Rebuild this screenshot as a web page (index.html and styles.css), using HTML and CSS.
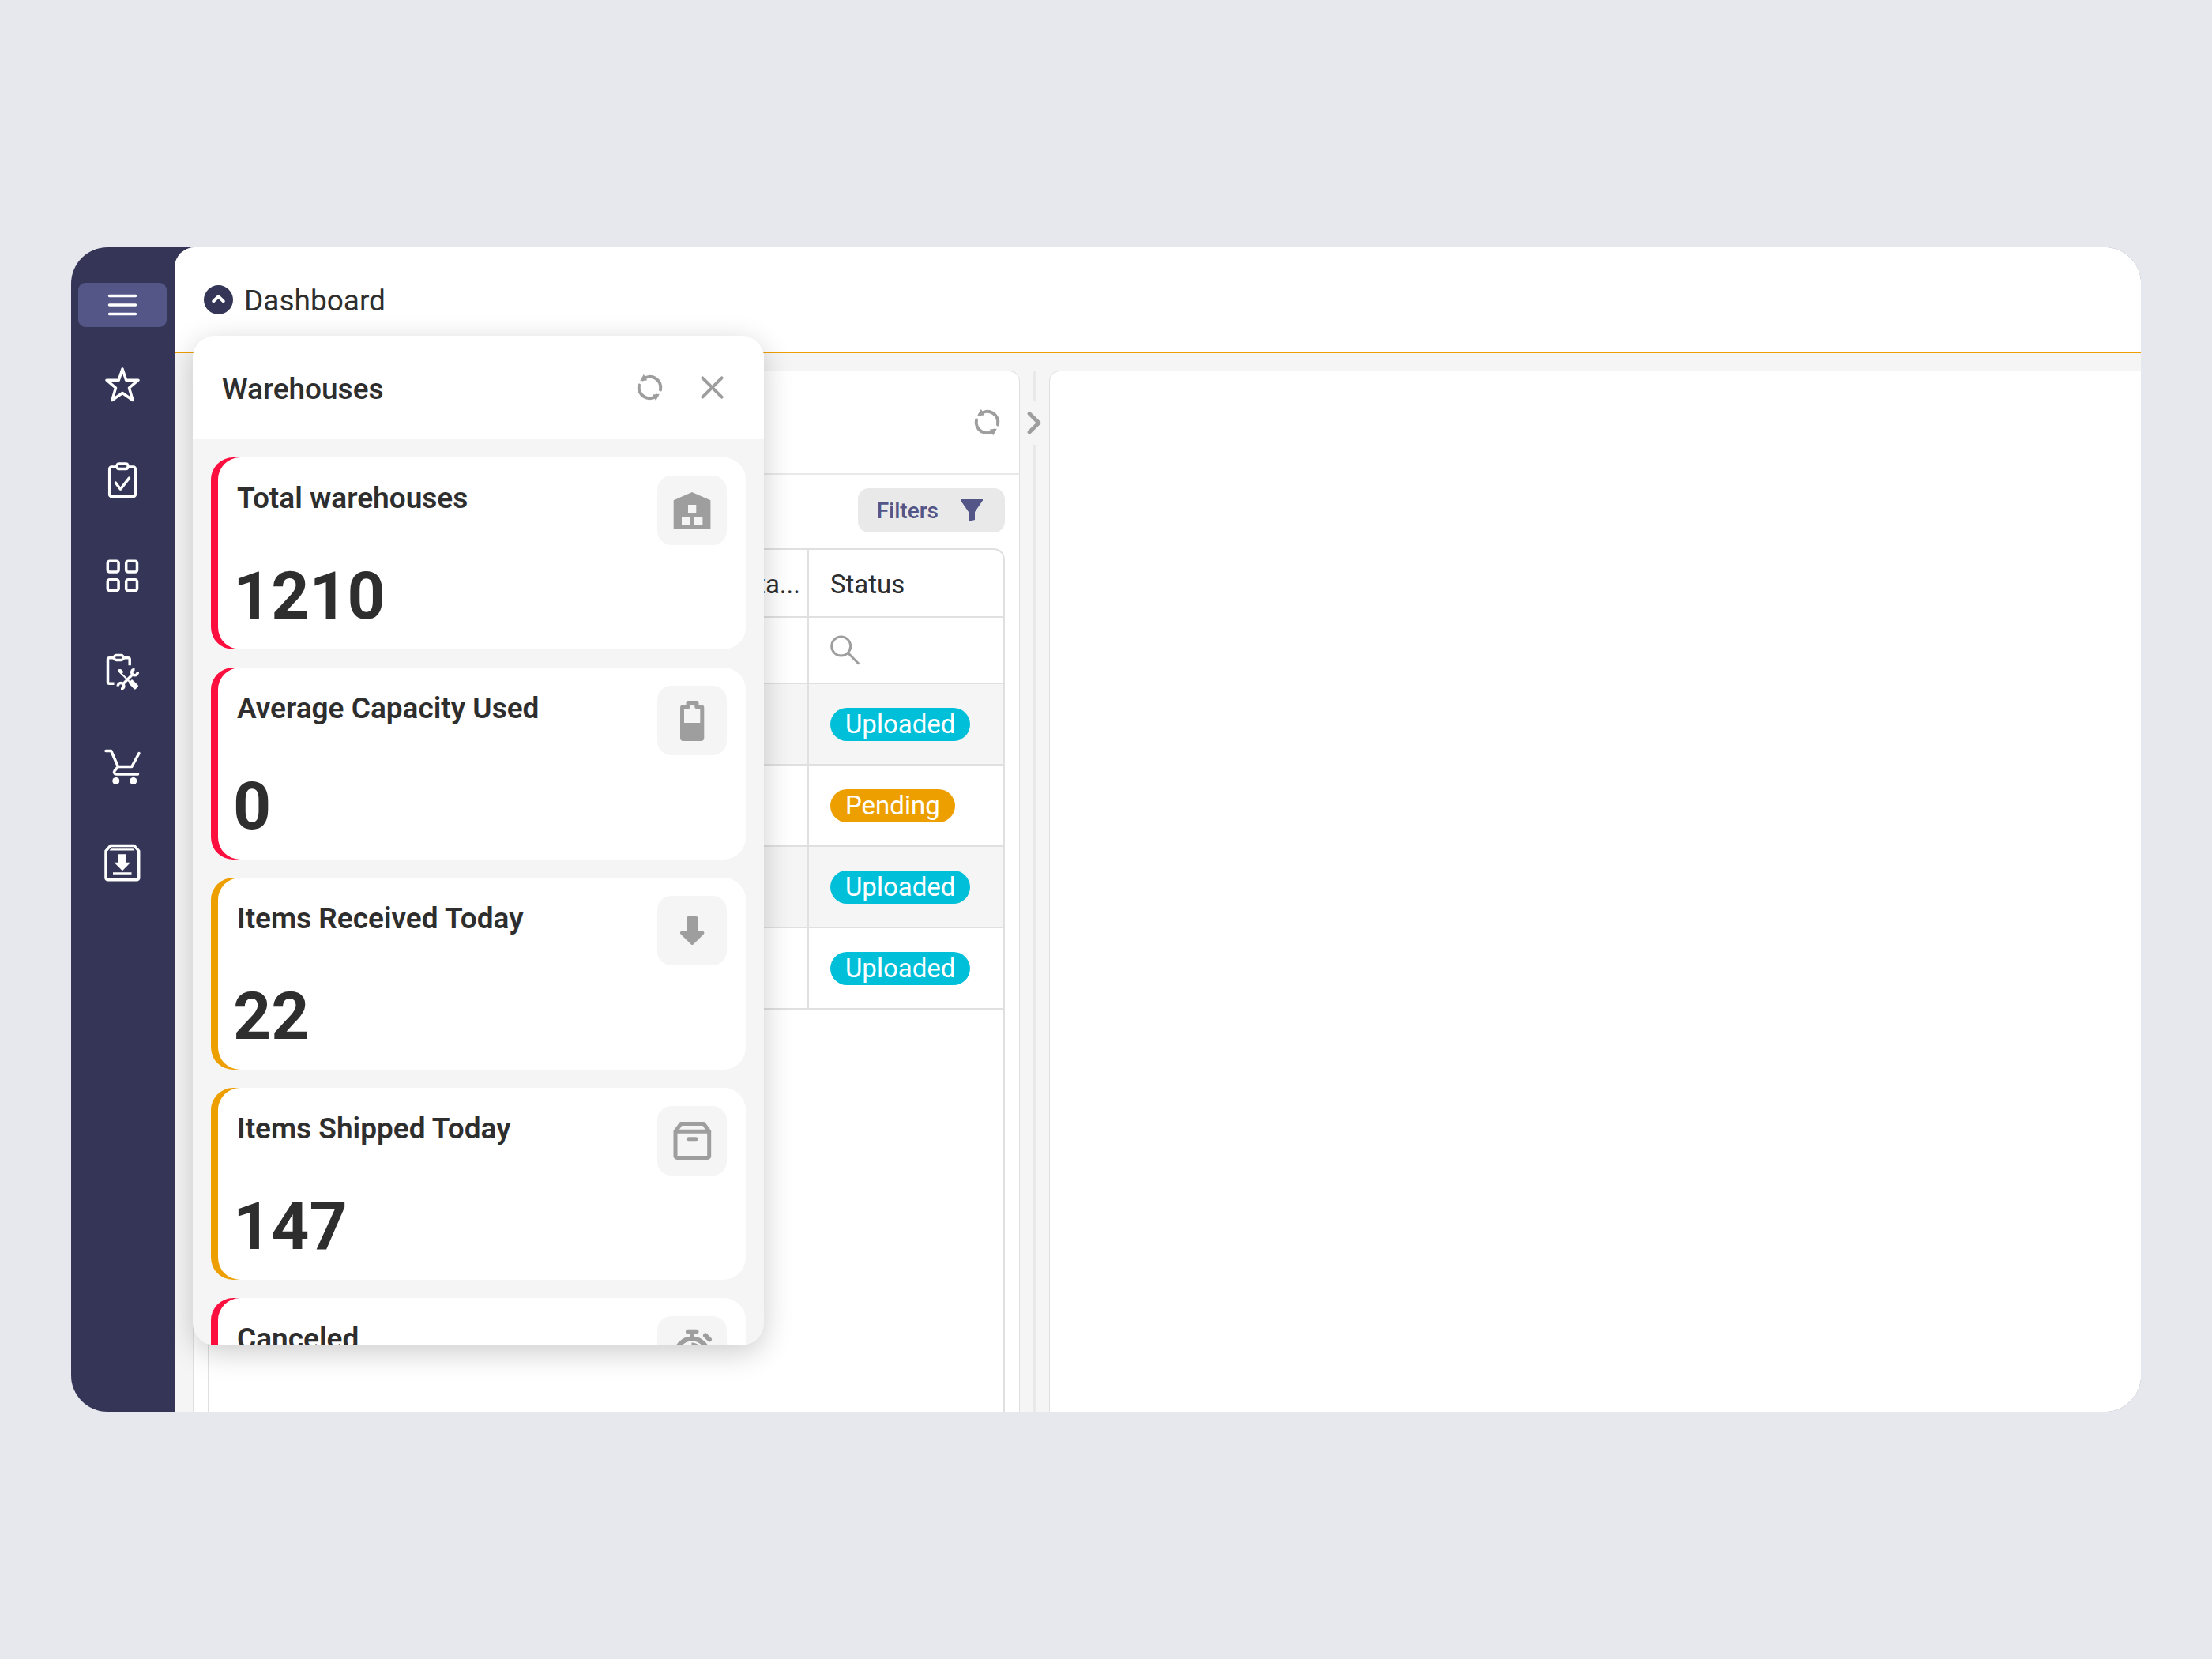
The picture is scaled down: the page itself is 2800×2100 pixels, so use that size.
FILE: index.html
```
<!DOCTYPE html>
<html lang="en">
<head>
	<meta charset="utf-8">
	<title>Dashboard</title>
	<link rel="stylesheet" href="styles.css">
</head>
<body>
<div class="app">
	<nav class="sidebar">
		<button class="menu_button" aria-label="Menu">
			<svg class="nav_icon" viewBox="0 0 48 48"><path d="M7.500 12.500h33M7.500 24h33M7.500 35.500h33"/></svg>
		</button>
		<button class="nav_button" aria-label="Favorites">
			<svg class="nav_icon" viewBox="0 0 48 48"><path d="M24 4l4.700 14.200H44L32.500 28l4.500 15.500L24 34.500 11 43.500 15.500 28 4 18.200h15.300z"/></svg>
		</button>
		<button class="nav_button" aria-label="Tasks">
			<svg class="nav_icon" viewBox="0 0 48 48">
				<rect x="7.700" y="7" width="32.600" height="37.500" rx="2.500"/>
				<rect class="clip" x="17" y="3" width="14" height="6.500" rx="2.500"/>
				<path d="M15.500 27.200l6 8 11-14"/>
			</svg>
		</button>
		<button class="nav_button" aria-label="Apps">
			<svg class="nav_icon" viewBox="0 0 48 48">
				<rect x="5.300" y="5.300" width="13.800" height="13.800" rx="2.500"/>
				<rect x="28.700" y="5.300" width="13.800" height="13.800" rx="2.500"/>
				<rect x="5.300" y="28.700" width="13.800" height="13.800" rx="2.500"/>
				<rect x="28.700" y="28.700" width="13.800" height="13.800" rx="2.500"/>
			</svg>
		</button>
		<button class="nav_button" aria-label="Maintenance">
			<svg class="nav_icon" viewBox="0 0 48 48">
				<path class="butt" d="M13.500 39.200H7.500a2 2 0 0 1-2-2V8.800a2 2 0 0 1 2-2h23.700a2 2 0 0 1 2 2v7.500"/>
				<rect class="clip" x="13.300" y="3.500" width="12" height="6" rx="3"/>
				<path d="M25 39.500l12-12"/>
				<path class="butt" d="M39.500 21.200A3.800 3.800 0 1 0 43.300 25M22 46.200A3.800 3.800 0 1 0 18.200 42.400"/>
				<path class="thin" d="M20 24l14 14"/>
				<path class="solid" d="M31.500 38.500l4.500-4.500 7.500 7a2 2 0 0 1 0 2.500l-2.500 2.500a2 2 0 0 1-2.500 0z"/>
				<path class="solid" d="M18 22.500l1.500-1.500h2.500l3.500 3.500-3 3-3-3z"/>
			</svg>
		</button>
		<button class="nav_button" aria-label="Orders">
			<svg class="nav_icon" viewBox="0 0 48 48">
				<path d="M3 3.500h6.700l8.800 20h17.300L45 6.500M18.500 23.500l-4.300 5c-1.500 2-.5 4.500 2.300 4.500h27"/>
				<circle class="solid" cx="15.800" cy="41.500" r="4.500"/>
				<circle class="solid" cx="37.800" cy="41.500" r="4.500"/>
			</svg>
		</button>
		<button class="nav_button" aria-label="Archive">
			<svg class="nav_icon" viewBox="0 0 48 48">
				<path d="M8.700 2.600H39l5.700 6.600v34a2.500 2.500 0 0 1-2.500 2.500H5.500A2.500 2.500 0 0 1 3 43.200v-34z"/>
				<path class="solid" d="M9.500 6.300h28l2 2.300h-32zM18.800 13.200h9.700v10.600h5.700L23.900 34.200 13.500 23.800h5.300zM12 36.300h23.500v2.400H12z"/>
			</svg>
		</button>
	</nav>

	<main class="main">
		<header class="page_header">
			<button class="collapse_button" aria-label="Collapse">
				<svg viewBox="0 0 37 37"><path d="M12.200 20.200l6.300-6 6.300 6"/></svg>
			</button>
			<h1 class="page_title">Dashboard</h1>
		</header>

		<div class="content">
			<section class="panel list_panel">
				<div class="panel_header">
					<button class="icon_button" aria-label="Refresh">
						<svg viewBox="0 0 37 37">
							<path d="M9.500 8.300A13.700 13.700 0 0 1 32 21.500M5 15.500A13.700 13.700 0 0 0 27.500 28.700"/>
							<path class="solid" d="M10.800 1.800l4.400 7.700-9 .7zM26.200 35.200l-4.400-7.700 9-.7z"/>
						</svg>
					</button>
				</div>
				<div class="toolbar">
					<button class="filter_button">
						Filters
						<svg viewBox="0 0 28 28"><path d="M0 0h28v1.500L18 16v10l-8 2V16L0 1.500z"/></svg>
					</button>
				</div>
				<div class="table_box">
					<table class="table">
						<thead>
							<tr>
								<th class="cut">Sta...</th>
								<th class="status_col">Status</th>
							</tr>
							<tr class="search_row">
								<td></td>
								<td>
									<label class="search">
										<svg viewBox="0 0 38 38"><circle cx="13.700" cy="14" r="12"/><path d="M22.500 22.500l13 13.200"/></svg>
										<input type="text" aria-label="Search status">
									</label>
								</td>
							</tr>
						</thead>
						<tbody>
							<tr><td></td><td><span class="badge uploaded">Uploaded</span></td></tr>
							<tr><td></td><td><span class="badge pending">Pending</span></td></tr>
							<tr><td></td><td><span class="badge uploaded">Uploaded</span></td></tr>
							<tr><td></td><td><span class="badge uploaded">Uploaded</span></td></tr>
						</tbody>
					</table>
				</div>
			</section>

			<div class="splitter">
				<div class="splitter_top"></div>
				<button class="splitter_button" aria-label="Expand">
					<svg viewBox="0 0 20 32"><path d="M4 4.500l12 11.700L4 28"/></svg>
				</button>
				<div class="splitter_line"></div>
			</div>

			<section class="panel detail_panel"></section>
		</div>

		<aside class="popover">
			<div class="popover_header">
				<h2 class="popover_title">Warehouses</h2>
				<button class="icon_button" aria-label="Refresh">
					<svg viewBox="0 0 37 37">
						<path d="M9.500 8.300A13.700 13.700 0 0 1 32 21.500M5 15.500A13.700 13.700 0 0 0 27.500 28.700"/>
						<path class="solid" d="M10.800 1.800l4.400 7.700-9 .7zM26.200 35.200l-4.400-7.700 9-.7z"/>
					</svg>
				</button>
				<button class="icon_button" aria-label="Close">
					<svg viewBox="0 0 37 37"><path d="M6.300 6.300l24.400 24.400M30.700 6.300L6.300 30.700"/></svg>
				</button>
			</div>
			<div class="cards">
				<article class="card red">
					<div>
						<h3 class="card_title">Total warehouses</h3>
						<p class="card_value">1210</p>
					</div>
					<span class="card_icon">
						<svg viewBox="0 0 56 56"><path class="solid" d="M28 5l23.400 10.200V52H4.700V15.200zM23 21v10h10.300V21zM15 36v11h10.700V36zM30.700 36v11h10.700V36z"/></svg>
					</span>
				</article>
				<article class="card red">
					<div>
						<h3 class="card_title">Average Capacity Used</h3>
						<p class="card_value">0</p>
					</div>
					<span class="card_icon">
						<svg viewBox="0 0 56 56"><path class="solid" d="M20.500 5.500A2.500 2.500 0 0 1 23 3h11a2.500 2.500 0 0 1 2.500 2.500V8h2.800a4 4 0 0 1 4 4v38a4 4 0 0 1-4 4H17a4 4 0 0 1-4-4V12a4 4 0 0 1 4-4h3.500zM18 13v18h20.300V13h-5a2 2 0 0 1-2-2V8.500h-5.600V11a2 2 0 0 1-2 2z"/></svg>
					</span>
				</article>
				<article class="card orange">
					<div>
						<h3 class="card_title">Items Received Today</h3>
						<p class="card_value">22</p>
					</div>
					<span class="card_icon">
						<svg viewBox="0 0 56 56"><path class="solid" d="M23.300 10h10a2 2 0 0 1 2 2v16.700H41.500c2 0 2.500 2.300 1.300 3.700L29.500 45.500a2 2 0 0 1-2.600 0L13.600 32.400c-1.200-1.400-.8-3.700 1.300-3.700h6.400V12a2 2 0 0 1 2-2z"/></svg>
					</span>
				</article>
				<article class="card orange">
					<div>
						<h3 class="card_title">Items Shipped Today</h3>
						<p class="card_value">147</p>
					</div>
					<span class="card_icon">
						<svg viewBox="0 0 56 56"><path d="M7 16.200h42.700v31.200a2 2 0 0 1-2 2H9a2 2 0 0 1-2-2zL14 6.400h28.700l7 9.800M23.800 25.700h9.200"/></svg>
					</span>
				</article>
				<article class="card red">
					<div>
						<h3 class="card_title">Canceled</h3>
					</div>
					<span class="card_icon">
						<svg viewBox="0 0 56 56">
							<circle class="thick" cx="28" cy="33" r="20.500"/>
							<path class="thick" d="M23 3.700h10.500M28 4v8M45 8.500l5 5"/>
							<path class="solid" d="M27.500 17.500A15.500 15.500 0 0 1 43 33H27.500z"/>
						</svg>
					</span>
				</article>
			</div>
		</aside>
	</main>
</div>
</body>
</html>
```
FILE: styles.css
```
/*
	navy:	#353657
	accent:	#535687
	orange:	#ee9f00
	red:	#fc0f3f
	cyan:	#00bfd8
*/
* {
	box-sizing: border-box;
}

body {
	margin: 0;
	min-height: 100vh;
	padding: 313px 90px;
	display: flex;
	background: #e7e8ee;
	color: #2e2e2e;
	font-family: Roboto, Arial, sans-serif;
}

h1, h2, h3, p {
	margin: 0;
}

svg {
	display: block;
	fill: none;
	stroke: #9e9e9e;
	stroke-width: 4;
	stroke-linecap: round;
	stroke-linejoin: round;
}

svg .solid {
	fill: #9e9e9e;
	fill-rule: evenodd;
	stroke: none;
}

button {
	border: 0;
	padding: 0;
	background: none;
	font-family: inherit;
	cursor: pointer;
}

.app {
	flex: 1;
	min-width: 0;
	display: flex;
	background: #353657;
	border-radius: 46px;
	overflow: hidden;
}

/* ---------- sidebar ---------- */

.sidebar {
	flex: 0 0 131px;
	padding: 45px 1px 0 0;
	display: flex;
	flex-direction: column;
	align-items: center;
	gap: 73px;
}

.menu_button {
	width: 112px;
	height: 56px;
	margin-bottom: -24px;
	display: flex;
	align-items: center;
	justify-content: center;
	border-radius: 9px;
	background: #535687;
}

.nav_icon {
	width: 48px;
	height: 48px;
	stroke: white;
	stroke-width: 3.5;
}

.nav_icon .clip {
	fill: #353657;
}

.nav_icon .butt {
	stroke-linecap: butt;
}

.nav_icon .thin {
	stroke-width: 2;
}

.nav_icon .solid {
	fill: white;
}

/* ---------- main ---------- */

.main {
	position: relative;
	flex: 1;
	min-width: 0;
	display: flex;
	flex-direction: column;
	background: #f5f5f5;
	border-top-left-radius: 26px;
	overflow: hidden;
}

.page_header {
	height: 134px;
	padding: 0 37px;
	display: flex;
	align-items: center;
	gap: 14px;
	background: white;
	border-bottom: 2px solid #ee9f00;
}

.collapse_button {
	width: 37px;
	height: 37px;
	border-radius: 50%;
	background: #353657;
}

.collapse_button svg {
	stroke: white;
}

.page_title {
	padding-top: 3px;
	font-size: 37px;
	font-weight: 400;
	line-height: 44px;
}

.content {
	flex: 1;
	padding: 22px 0 0 23px;
	display: grid;
	grid-template-columns: 25fr 37px 33fr;
}

.panel {
	min-width: 0;
	display: flex;
	flex-direction: column;
	background: white;
	border: 1px solid #e0e0e0;
	border-bottom: 0;
}

.list_panel {
	border-radius: 14px 14px 0 0;
}

.detail_panel {
	border-right: 0;
	border-radius: 14px 0 0 0;
}

.panel_header {
	height: 131px;
	padding: 0 22px;
	display: flex;
	align-items: center;
	justify-content: flex-end;
	border-bottom: 2px solid #e9e9e9;
}

.icon_button {
	width: 37px;
	height: 37px;
}

.toolbar {
	padding: 17px 18px 20px;
	display: flex;
	justify-content: flex-end;
}

.filter_button {
	height: 56px;
	padding: 0 28px 0 24px;
	display: flex;
	align-items: center;
	gap: 28px;
	border-radius: 14px;
	background: #e9e9e9;
	color: #535687;
	font-size: 28px;
	font-weight: 500;
}

.filter_button svg {
	width: 28px;
	height: 28px;
	fill: #535687;
	stroke: none;
}

.table_box {
	flex: 1;
	margin: 0 18px;
	border: 2px solid #e0e0e0;
	border-bottom: 0;
	border-radius: 14px 14px 0 0;
	overflow: hidden;
}

.table {
	width: 100%;
	table-layout: fixed;
	border-spacing: 0;
	font-size: 33px;
}

.table th,
.table td {
	height: 103px;
	padding: 0 0 0 27px;
	border-bottom: 2px solid #e0e0e0;
	font-weight: 400;
	text-align: left;
}

.table th {
	height: 86px;
	padding-top: 3px;
}

.table .search_row td {
	height: 84px;
}

.table .cut {
	padding-right: 9px;
	text-align: right;
}

.table th:first-child,
.table td:first-child {
	border-right: 2px solid #e0e0e0;
}

.table tbody tr:nth-child(odd) {
	background: #f5f5f5;
}

.status_col {
	width: 246px;
}

.search {
	display: flex;
	align-items: center;
	gap: 14px;
}

.search svg {
	flex: none;
	width: 38px;
	height: 38px;
	stroke-width: 3;
}

.search input {
	width: 100%;
	min-width: 0;
	border: 0;
	outline: 0;
	background: none;
	font: inherit;
}

.badge {
	display: inline-block;
	padding: 0 19px;
	border-radius: 21px;
	color: white;
	line-height: 42px;
	vertical-align: middle;
}

.uploaded {
	background: #00bfd8;
}

.pending {
	background: #ee9f00;
}

.splitter {
	display: flex;
	flex-direction: column;
	align-items: center;
}

.splitter_top,
.splitter_line {
	width: 5px;
	background: #e9e9e9;
}

.splitter_top {
	height: 38px;
}

.splitter_line {
	flex: 1;
}

.splitter_button {
	height: 56px;
}

.splitter_button svg {
	width: 20px;
	height: 32px;
	stroke-width: 5;
}

/* ---------- warehouses popover ---------- */

.popover {
	position: absolute;
	top: 112px;
	left: 23px;
	bottom: 84px;
	width: 723px;
	display: flex;
	flex-direction: column;
	background: #f5f5f5;
	border-radius: 28px;
	box-shadow: 0 9px 37px rgb(0 0 0 / 20%);
	overflow: hidden;
}

.popover_header {
	flex: none;
	height: 131px;
	padding: 0 47px 0 37px;
	display: flex;
	align-items: center;
	gap: 42px;
	background: white;
}

.popover_title {
	flex: 1;
	padding-top: 4px;
	font-size: 37px;
	font-weight: 500;
	line-height: 44px;
}

.cards {
	flex: 1;
	min-height: 0;
	padding: 23px;
	display: flex;
	flex-direction: column;
	gap: 23px;
	overflow: hidden;
}

.card {
	flex: none;
	height: 243px;
	padding: 23px 24px 0 28px;
	display: flex;
	justify-content: space-between;
	background: white;
	border-radius: 28px;
}

.card.red {
	box-shadow: inset 9px 0 0 #fc0f3f;
}

.card.orange {
	box-shadow: inset 9px 0 0 #ee9f00;
}

.card_title {
	padding: 7px 0 0 5px;
	font-size: 37px;
	font-weight: 600;
	line-height: 44px;
}

.card_value {
	padding-top: 53px;
	font-size: 84px;
	font-weight: 700;
	line-height: 98px;
}

.card_icon {
	width: 88px;
	height: 88px;
	padding: 16px;
	border-radius: 18px;
	background: #f5f5f5;
}

.card_icon svg {
	stroke-width: 5;
}

.card_icon .thick {
	stroke-width: 6;
}
```
